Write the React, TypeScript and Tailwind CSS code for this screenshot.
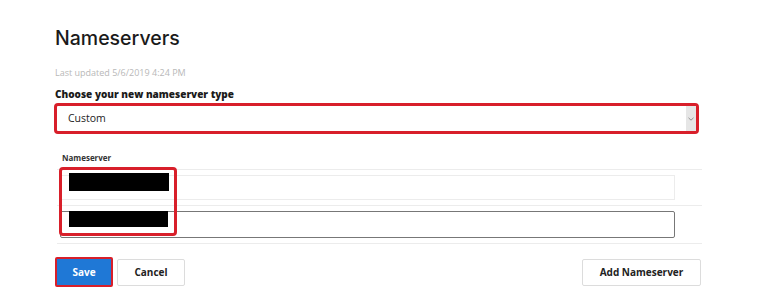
import React from 'react';

const App: React.FC = () => {
  return (
    <div className="w-[768px] h-[306px] bg-white overflow-hidden font-['Open_Sans',sans-serif] text-[#111]">
      <div className="pl-[55px] pt-[23px] w-[701px]">
        {/* Title */}
        <h1 className="font-['Inter',sans-serif] text-[19.5px] leading-[30px] font-medium text-[#1a1a1a]">Nameservers</h1>
        <p className="mt-[14px] text-[9px] leading-[12px] text-[#b8b8b8]">Last updated 5/6/2019 4:24 PM</p>

        {/* Type select */}
        <label className="block mt-[8px] text-[10px] leading-[14px] font-extrabold text-[#1a1a1a]">
          Choose your new nameserver type
        </label>
        <div className="mt-[2px] w-[645px] h-[31px] -ml-[1px] border-[3px] border-[#d81f2a] rounded-[4px] flex items-center bg-white">
          <span className="flex-1 pl-[11px] text-[10.5px] text-[#222]">Custom</span>
          <div className="w-[10px] h-[25px] bg-[#e6e6e6] flex items-center justify-center">
            <svg width="6" height="4" viewBox="0 0 6 4" fill="none">
              <path d="M0.5 0.8 L3 3.2 L5.5 0.8" stroke="#888" strokeWidth="0.9" />
            </svg>
          </div>
        </div>

        {/* Nameserver table */}
        <div className="relative mt-[19px] w-[645px] ml-[2px]">
          <div className="pl-[5px] text-[8px] leading-[10px] font-bold text-[#333]">Nameserver</div>
          <div className="mt-[6px] border-t border-[#ececec]">
            <div className="h-[36px] border-b border-[#ececec] flex items-center pl-[3px]">
              <div className="w-[615px] h-[25px] border border-[#ececec] bg-white" />
            </div>
            <div className="h-[38px] border-b border-[#ececec] flex items-center pl-[3px]">
              <div className="w-[615px] h-[27px] border border-[#777] rounded-[2px] bg-white" />
            </div>
          </div>

          {/* redaction overlay */}
          <div className="absolute left-[2px] top-[14px] w-[118px] h-[69px] border-[3px] border-[#d81f2a] rounded-[4px]" />
          <div className="absolute left-[12px] top-[20px] w-[100px] h-[18px] bg-black" />
          <div className="absolute left-[12px] top-[58px] w-[99px] h-[16px] bg-black" />
        </div>

        {/* Actions */}
        <div className="mt-[13px] flex items-center">
          <button className="w-[58px] h-[30px] border-2 border-[#d81f2a] rounded-[2px] bg-[#1f78d6] text-white text-[10px] font-bold">
            Save
          </button>
          <button className="ml-[4px] w-[68px] h-[27px] border border-[#dcdcdc] rounded-[2px] bg-white text-[10px] font-bold text-[#222]">
            Cancel
          </button>
          <div className="flex-1" />
          <button className="w-[119px] h-[27px] border border-[#dcdcdc] rounded-[2px] bg-white text-[10px] font-bold text-[#222]">
            Add Nameserver
          </button>
        </div>
      </div>
    </div>
  );
};

export default App;
